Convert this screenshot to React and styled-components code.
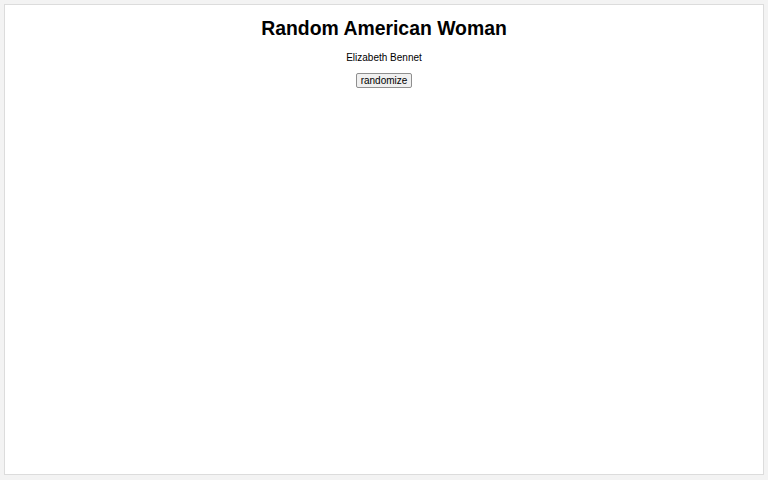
import React, { useState } from "react";
import styled, { createGlobalStyle } from "styled-components";

const names = [
  "Elizabeth Bennet",
  "Abigail Adams",
  "Amelia Earhart",
  "Harriet Tubman",
  "Eleanor Roosevelt",
  "Rosa Parks",
];

const GlobalStyle = createGlobalStyle`
  html, body {
    margin: 0;
    padding: 0;
    background: #f3f3f3;
  }
  body {
    font-family: "Liberation Sans", Arial, sans-serif;
  }
`;

const Page = styled.div`
  box-sizing: border-box;
  height: 480px;
  padding: 4px 4px 5px 4px;
  display: flex;
`;

const Panel = styled.div`
  flex: 1;
  background: #ffffff;
  border: 1px solid #dcdcdc;
  display: flex;
  flex-direction: column;
  align-items: center;
  padding-top: 12px;
`;

const Title = styled.h1`
  margin: 0;
  font-size: 19.4px;
  font-weight: bold;
  color: #000;
`;

const Name = styled.p`
  margin: 12px 0 0;
  font-size: 10px;
  color: #000;
`;

const Button = styled.button`
  margin-top: 10px;
  font-family: "Liberation Sans", Arial, sans-serif;
  font-size: 10px;
  padding: 1px 4px;
  color: #000;
  background: #f0f0f0;
  border: 1px solid #8f8f8f;
  border-radius: 2px;
`;

export default function App() {
  const [name, setName] = useState(names[0]);

  const randomize = () => {
    setName(names[Math.floor(Math.random() * names.length)]);
  };

  return (
    <>
      <GlobalStyle />
      <Page>
        <Panel>
          <Title>Random American Woman</Title>
          <Name>{name}</Name>
          <Button onClick={randomize}>randomize</Button>
        </Panel>
      </Page>
    </>
  );
}
